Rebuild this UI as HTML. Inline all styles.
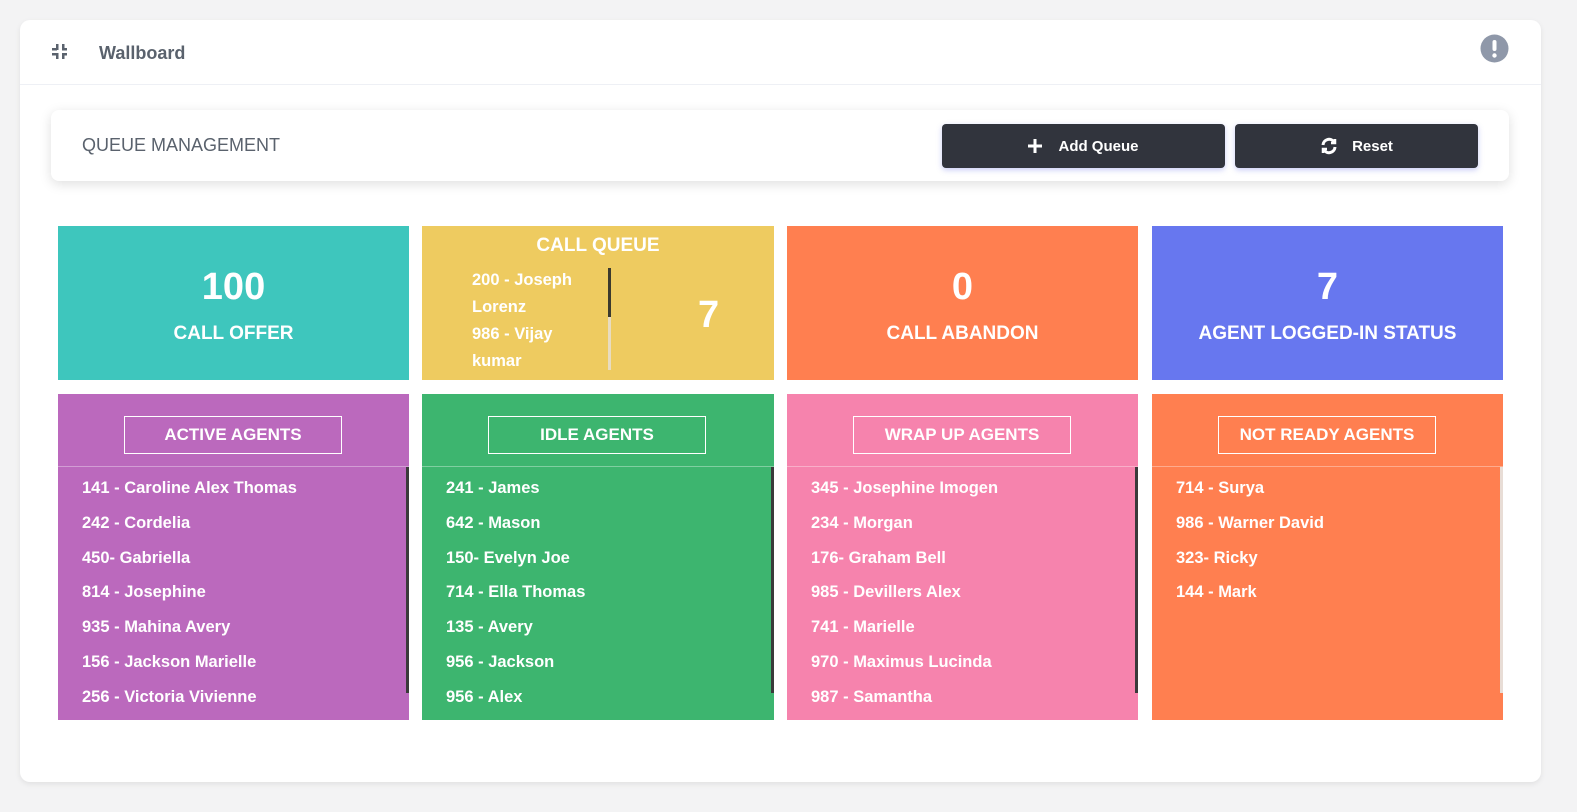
<!DOCTYPE html>
<html><head><style>
*{box-sizing:border-box;margin:0;padding:0}
html{overflow:hidden}
body{width:1577px;height:812px;background:#f3f3f4;font-family:"Liberation Sans",sans-serif;position:relative;overflow:hidden}
.card{position:absolute;left:20px;top:20px;width:1521px;height:762px;background:#fff;border-radius:10px;box-shadow:0 2px 6px rgba(0,0,0,.08)}
.hdr{position:absolute;left:0;top:0;width:100%;height:65px;border-bottom:1px solid #eef0f5}
.title{position:absolute;left:79px;top:23px;font-size:18px;color:#5a626d;font-weight:bold}
.qm{position:absolute;left:31px;top:90px;width:1458px;height:71px;background:#fff;border-radius:8px;box-shadow:0 3px 12px rgba(0,0,0,.13)}
.qmt{position:absolute;left:31px;top:25px;font-size:18px;color:#5a626d}
.btn{position:absolute;top:14px;height:44px;background:#31343d;border-radius:4px;color:#fff;font-size:15px;font-weight:bold;display:flex;align-items:center;justify-content:center;box-shadow:0 2px 6px rgba(100,110,230,.35)}
.t{position:absolute;color:#fff;font-weight:bold;text-align:center}
.big{font-size:38px}
.lbl{font-size:19px}
.box{position:absolute;left:66px;top:22px;width:218px;height:38px;border:1px solid #fff;font-size:17px;line-height:36px;text-align:center}
.div{position:absolute;left:0;right:0;top:72px;height:1px;background:rgba(255,255,255,.35)}
.list{position:absolute;left:24px;top:77px;font-size:16.5px;line-height:34.8px;text-align:left}
.sb{position:absolute;right:0;top:73px;width:3px;height:226px;background:#3a3a3a}
</style></head><body>
<div class="card">
 <div class="hdr">
  <svg style="position:absolute;left:30px;top:22px" width="20" height="20" viewBox="0 0 20 20" fill="#5a626d"><rect x="2" y="6" width="5" height="2.5"/><rect x="6" y="2" width="2.5" height="6"/><rect x="12" y="6" width="5" height="2.5"/><rect x="12" y="2" width="2.5" height="6"/><rect x="2" y="11" width="5" height="2.5"/><rect x="6" y="11" width="2.5" height="6"/><rect x="12" y="11" width="5" height="2.5"/><rect x="12" y="11" width="2.5" height="6"/></svg>
  <div class="title">Wallboard</div>
  <svg style="position:absolute;left:1460px;top:14px" width="29" height="29" viewBox="0 0 29 29"><circle cx="14.5" cy="14.5" r="14" fill="#8f98a9"/><rect x="12.5" y="6" width="4" height="11" rx="2" fill="#fff"/><circle cx="14.5" cy="21.5" r="2.2" fill="#fff"/></svg>
 </div>
 <div class="qm"><div class="qmt">QUEUE MANAGEMENT</div>
  <div class="btn" style="left:891px;width:283px"><svg width="14" height="14" viewBox="0 0 14 14" style="margin-right:16px"><rect x="5.5" y="0" width="3" height="14" fill="#fff"/><rect x="0" y="5.5" width="14" height="3" fill="#fff"/></svg>Add Queue</div>
  <div class="btn" style="left:1184px;width:243px"><svg width="18" height="18" viewBox="0 0 18 18" style="margin-right:14px" fill="none" stroke="#fff" stroke-width="3"><path d="M3 8a6 6 0 0 1 11-3"/><path d="M15 10a6 6 0 0 1-11 3"/><path d="M15 2v4h-4" stroke-width="2.5"/><path d="M3 16v-4h4" stroke-width="2.5"/></svg>Reset</div>
 </div>
</div>

<div class="t" style="left:58px;top:226px;width:351px;height:154px;background:#3ec6bd"><div class="big" style="margin-top:40px">100</div><div class="lbl" style="margin-top:14px">CALL OFFER</div></div>
<div class="t" style="left:422px;top:226px;width:352px;height:154px;background:#eecb60">
 <div class="lbl" style="margin-top:9px">CALL QUEUE</div>
 <div style="position:absolute;left:50px;top:41px;text-align:left;font-size:16.5px;line-height:27px">200 - Joseph<br>Lorenz<br>986 - Vijay<br>kumar</div>
 <div style="position:absolute;left:186px;top:42px;width:3px;height:102px;background:#e8dcc0"></div>
 <div style="position:absolute;left:186px;top:42px;width:3px;height:49px;background:#3b3a2e"></div>
 <div class="big" style="position:absolute;left:276px;top:68px">7</div>
</div>
<div class="t" style="left:787px;top:226px;width:351px;height:154px;background:#ff7f50"><div class="big" style="margin-top:40px">0</div><div class="lbl" style="margin-top:14px">CALL ABANDON</div></div>
<div class="t" style="left:1152px;top:226px;width:351px;height:154px;background:#6777ef"><div class="big" style="margin-top:40px">7</div><div class="lbl" style="margin-top:14px">AGENT LOGGED-IN STATUS</div></div>

<div class="t" style="left:58px;top:394px;width:351px;height:326px;background:#bb69bd"><div class="box">ACTIVE AGENTS</div><div class="div"></div><div class="sb"></div>
<div class="list">141 - Caroline Alex Thomas<br>242 - Cordelia<br>450- Gabriella<br>814 - Josephine<br>935 - Mahina Avery<br>156 - Jackson Marielle<br>256 - Victoria Vivienne</div></div>
<div class="t" style="left:422px;top:394px;width:352px;height:326px;background:#3db56f"><div class="box">IDLE AGENTS</div><div class="div"></div><div class="sb"></div>
<div class="list">241 - James<br>642 - Mason<br>150- Evelyn Joe<br>714 - Ella Thomas<br>135 - Avery<br>956 - Jackson<br>956 - Alex</div></div>
<div class="t" style="left:787px;top:394px;width:351px;height:326px;background:#f683ad"><div class="box">WRAP UP AGENTS</div><div class="div"></div><div class="sb"></div>
<div class="list">345 - Josephine Imogen<br>234 - Morgan<br>176- Graham Bell<br>985 - Devillers Alex<br>741 - Marielle<br>970 - Maximus Lucinda<br>987 - Samantha</div></div>
<div class="t" style="left:1152px;top:394px;width:351px;height:326px;background:#ff7f50"><div class="box">NOT READY AGENTS</div><div class="div"></div><div class="sb" style="background:#e8ddd6"></div>
<div class="list">714 - Surya<br>986 - Warner David<br>323- Ricky<br>144 - Mark</div></div>
</body></html>
